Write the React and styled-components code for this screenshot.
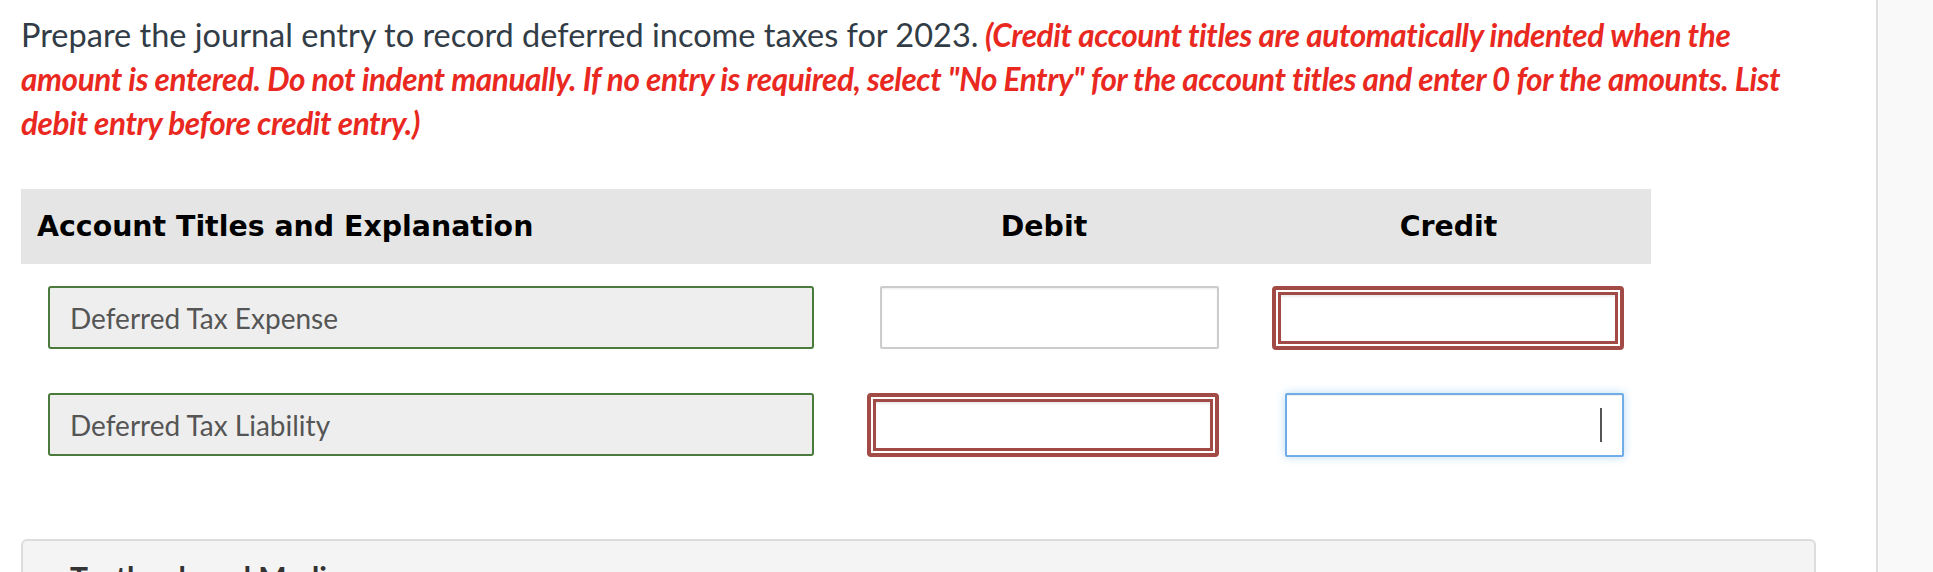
import styled, { createGlobalStyle } from "styled-components";

const GlobalStyle = createGlobalStyle`
  html, body {
    margin: 0;
    padding: 0;
    background: #fff;
  }
  * {
    box-sizing: border-box;
  }
`;

function App() {
  const rows = [
    { title: "Deferred Tax Expense", debit: "plain", credit: "error" },
    { title: "Deferred Tax Liability", debit: "error", credit: "focused" },
  ];

  const renderAmount = (state) => {
    if (state === "error")
      return (
        <ErrorBox>
          <ErrorInput />
        </ErrorBox>
      );
    if (state === "focused")
      return (
        <FocusedInput>
          <Caret />
        </FocusedInput>
      );
    return <AmountInput />;
  };

  return (
    <Page>
      <GlobalStyle />
      <Main>
        <Prompt>
          Prepare the journal entry to record deferred income taxes for 2023.
          <Instruction>
            {" "}
            (Credit account titles are automatically indented when the amount
            is entered. Do not indent manually. If no entry is required, select
            "No Entry" for the account titles and enter 0 for the amounts. List
            debit entry before credit entry.)
          </Instruction>
        </Prompt>

        <Table>
          <HeadCell>Account Titles and Explanation</HeadCell>
          <HeadCell $center>Debit</HeadCell>
          <HeadCell $center>Credit</HeadCell>

          {rows.map((row) => (
            <Row key={row.title}>
              <TitleCell>
                <TitleInput>{row.title}</TitleInput>
              </TitleCell>
              <AmountCell>{renderAmount(row.debit)}</AmountCell>
              <AmountCell>{renderAmount(row.credit)}</AmountCell>
            </Row>
          ))}
        </Table>

        <MediaPanel>
          <MediaTitle>Textbook and Media</MediaTitle>
        </MediaPanel>
      </Main>
      <Sidebar />
    </Page>
  );
}

export default App;

const Page = styled.div`
  display: flex;
  height: 100vh;
  overflow: hidden;
`;

const Main = styled.div`
  flex: 1;
  padding: 13px 60px 0 21px;
  font-family: Lato, "Open Sans", sans-serif;
`;

const Sidebar = styled.div`
  width: 57px;
  flex-shrink: 0;
  background: #f9f9f9;
  border-left: 2px solid #dedede;
`;

const Prompt = styled.p`
  margin: 0;
  font-size: 32.5px;
  line-height: 43px;
  color: #323c46;
`;

const Instruction = styled.span`
  color: #e9291f;
  font-weight: 700;
  font-style: italic;
  font-size: 31.5px;
  letter-spacing: -0.4px;
`;

const Table = styled.div`
  margin-top: 44px;
  width: 1630px;
  display: grid;
  grid-template-columns: 821px 404px 405px;
`;

const HeadCell = styled.div`
  height: 75px;
  background: #e5e5e5;
  display: flex;
  align-items: center;
  justify-content: ${(p) => (p.$center ? "center" : "flex-start")};
  padding-left: ${(p) => (p.$center ? "0" : "16px")};
  font-family: "DejaVu Sans", Verdana, sans-serif;
  font-weight: 700;
  font-size: 28.4px;
  color: #000;
`;

const Row = styled.div`
  display: contents;
`;

const TitleCell = styled.div`
  padding: 22px 0 21px 27px;
`;

const AmountCell = styled.div`
  padding: 22px 27px 21px 0;
  display: flex;
  justify-content: flex-end;
`;

const TitleInput = styled.div`
  width: 766px;
  height: 63px;
  display: flex;
  align-items: center;
  padding: 0 20px;
  background: #eeeeee;
  border: 2px solid #4a7b3d;
  border-radius: 3px;
  font-size: 28px;
  color: #555;
`;

const AmountInput = styled.div`
  width: 339px;
  height: 63px;
  background: #fff;
  border: 2px solid #cccccc;
  border-radius: 2px;
  box-shadow: inset 0 1px 2px rgba(0, 0, 0, 0.08);
`;

const ErrorBox = styled.div`
  width: 352px;
  height: 64px;
  padding: 2px;
  background: #fff;
  border: 4px solid #a24a45;
  border-radius: 4px;
`;

const ErrorInput = styled.div`
  height: 100%;
  background: #fff;
  border: 3px solid #a24a45;
  box-shadow: inset 0 2px 2px rgba(0, 0, 0, 0.08);
`;

const FocusedInput = styled.div`
  width: 339px;
  height: 64px;
  display: flex;
  align-items: center;
  justify-content: flex-end;
  padding-right: 20px;
  background: #fff;
  border: 2px solid #70ade6;
  border-radius: 2px;
  box-shadow: inset 0 1px 1px rgba(0, 0, 0, 0.075),
    0 0 10px rgba(102, 175, 233, 0.45);
`;

const Caret = styled.span`
  width: 2px;
  height: 34px;
  background: #555;
`;

const MediaPanel = styled.div`
  margin-top: 61px;
  height: 120px;
  background: #f4f4f4;
  border: 2px solid #dcdcdc;
  border-bottom: none;
  border-radius: 6px 6px 0 0;
  padding: 18px 0 0 47px;
`;

const MediaTitle = styled.div`
  font-size: 30px;
  font-weight: 700;
  color: #333;
`;
